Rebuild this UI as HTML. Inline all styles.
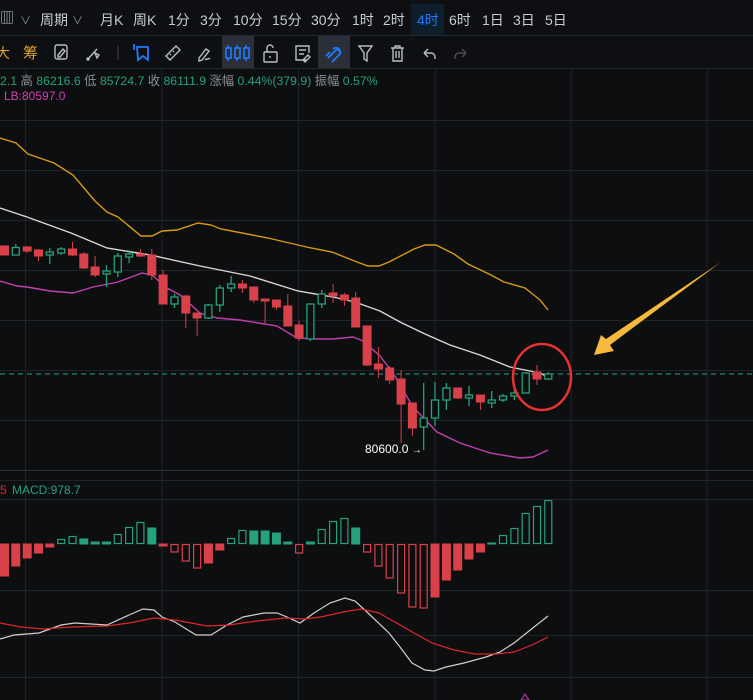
<!DOCTYPE html>
<html><head><meta charset="utf-8"><style>
html,body{margin:0;padding:0;background:#0d0e10;width:753px;height:700px;overflow:hidden;font-family:"Liberation Sans","Noto Sans CJK SC",sans-serif}
.r1{position:absolute;left:0;top:0;width:753px;height:35px;border-bottom:1px solid #24272c;background:#0e0f12}
.r1 span{position:absolute;top:10px;font-size:14px;color:#c8ccd2}
.r2{position:absolute;left:0;top:36px;width:753px;height:32px;border-bottom:1px solid #24272c;background:#0e0f12}
.info{position:absolute;top:71px;left:0;font-size:12.3px;color:#8a8f98;white-space:pre}
.info b{font-weight:normal;color:#26a17b}
</style></head><body>
<svg width="753" height="700" style="position:absolute;left:0;top:0">
<g stroke="#1f2226" stroke-width="1">
<line x1="25.5" y1="68" x2="25.5" y2="700"/><line x1="162" y1="68" x2="162" y2="700"/><line x1="298.5" y1="68" x2="298.5" y2="700"/><line x1="435" y1="68" x2="435" y2="700"/><line x1="571" y1="68" x2="571" y2="700"/><line x1="707" y1="68" x2="707" y2="700"/>
<line x1="0" y1="120.5" x2="753" y2="120.5"/><line x1="0" y1="170.5" x2="753" y2="170.5"/><line x1="0" y1="220.5" x2="753" y2="220.5"/><line x1="0" y1="270.5" x2="753" y2="270.5"/><line x1="0" y1="320.5" x2="753" y2="320.5"/><line x1="0" y1="370.5" x2="753" y2="370.5"/><line x1="0" y1="420.5" x2="753" y2="420.5"/>
<line x1="0" y1="470.5" x2="753" y2="470.5" stroke="#2a2d32"/>
<line x1="0" y1="480.5" x2="753" y2="480.5"/><line x1="0" y1="499.5" x2="753" y2="499.5"/><line x1="0" y1="590.5" x2="753" y2="590.5"/><line x1="0" y1="635.5" x2="753" y2="635.5"/><line x1="0" y1="677.5" x2="753" y2="677.5"/>
</g>
<line x1="0" y1="374" x2="753" y2="374" stroke="#1fa67a" stroke-dasharray="5,4" stroke-width="1"/>
<g fill="none" stroke-width="1.4">
<polyline stroke="#d99a0f" points="0,138 16,143 28,154 54,163 73,175 95,201 107,212 118,217 141,236 152,236 162,231 177,230 198,223 211,225 221,229 268,238 298,245 311,248 332,252 357,262 368,266 379,266 389,262 414,249 425,245 436,245 454,254 468,264 489,274 504,282 525,288 540,300 548,310"/>
<polyline stroke="#d8d8d8" points="0,208 27,217 71,233 95,243 107,248 150,255 200,266 250,276 298,291 333,297 355,302 380,311 400,322 425,334 450,345 480,355 510,367 540,373 548,377"/>
<polyline stroke="#c23fae" points="0,281 17,286 27,287 50,291 73,293 93,287 118,282 142,273 152,275 167,288 180,295 200,313 217,318 240,320 277,326 297,338 320,339 333,339 353,337 363,341 380,356 393,373 413,407 437,432 460,443 490,453 520,458 533,457 548,450"/>
</g>
<g stroke="#d9414a" stroke-width="1" fill="#d9414a">
<line x1="4.5" y1="246" x2="4.5" y2="255"/><rect x="0.5" y="246" width="8" height="9"/>
<line x1="27.2" y1="246" x2="27.2" y2="253"/><rect x="23.2" y="247" width="8" height="4"/>
<line x1="38.5" y1="249" x2="38.5" y2="261"/><rect x="34.5" y="250" width="8" height="6"/>
<line x1="72.5" y1="242" x2="72.5" y2="256"/><rect x="68.5" y="249" width="8" height="6"/>
<line x1="83.8" y1="252" x2="83.8" y2="269"/><rect x="79.8" y="254" width="8" height="14"/>
<line x1="95.1" y1="256" x2="95.1" y2="277"/><rect x="91.1" y="267" width="8" height="8"/>
<line x1="140.5" y1="249" x2="140.5" y2="257"/><rect x="136.5" y="254" width="8" height="2"/>
<line x1="151.8" y1="249" x2="151.8" y2="280"/><rect x="147.8" y="255" width="8" height="20"/>
<line x1="163.1" y1="270" x2="163.1" y2="304"/><rect x="159.1" y="275" width="8" height="29"/>
<line x1="185.8" y1="295" x2="185.8" y2="328"/><rect x="181.8" y="296" width="8" height="17"/>
<line x1="197.1" y1="313" x2="197.1" y2="336"/><rect x="193.1" y="313" width="8" height="5"/>
<line x1="242.4" y1="280" x2="242.4" y2="293"/><rect x="238.4" y="284" width="8" height="4"/>
<line x1="253.8" y1="287" x2="253.8" y2="303"/><rect x="249.8" y="287" width="8" height="13"/>
<line x1="265.1" y1="299" x2="265.1" y2="323"/><rect x="261.1" y="299" width="8" height="2"/>
<line x1="276.4" y1="300" x2="276.4" y2="310"/><rect x="272.4" y="300" width="8" height="7"/>
<line x1="287.8" y1="294" x2="287.8" y2="326"/><rect x="283.8" y="306" width="8" height="20"/>
<line x1="299.1" y1="321" x2="299.1" y2="341"/><rect x="295.1" y="325" width="8" height="13"/>
<line x1="333.1" y1="284" x2="333.1" y2="303"/><rect x="329.1" y="293" width="8" height="3"/>
<line x1="344.4" y1="293" x2="344.4" y2="306"/><rect x="340.4" y="295" width="8" height="5"/>
<line x1="355.7" y1="292" x2="355.7" y2="327"/><rect x="351.7" y="298" width="8" height="29"/>
<line x1="367.1" y1="326" x2="367.1" y2="366"/><rect x="363.1" y="326" width="8" height="39"/>
<line x1="378.4" y1="347" x2="378.4" y2="378"/><rect x="374.4" y="364" width="8" height="5"/>
<line x1="389.7" y1="366" x2="389.7" y2="384"/><rect x="385.7" y="368" width="8" height="12"/>
<line x1="401.1" y1="370" x2="401.1" y2="443"/><rect x="397.1" y="379" width="8" height="25"/>
<line x1="412.4" y1="403" x2="412.4" y2="436"/><rect x="408.4" y="403" width="8" height="25"/>
<line x1="457.7" y1="388" x2="457.7" y2="399"/><rect x="453.7" y="388" width="8" height="10"/>
<line x1="480.4" y1="395" x2="480.4" y2="410"/><rect x="476.4" y="395" width="8" height="7"/>
<line x1="537" y1="365" x2="537" y2="385"/><rect x="533" y="372" width="8" height="7"/>
</g>
<g stroke="#26a17b" stroke-width="1.3" fill="#0d0e10">
<line x1="15.8" y1="244" x2="15.8" y2="255"/><rect x="12.3" y="247.5" width="7" height="7.5"/>
<line x1="49.8" y1="248" x2="49.8" y2="264"/><rect x="46.3" y="252" width="7" height="3"/>
<line x1="61.2" y1="247" x2="61.2" y2="255"/><rect x="57.7" y="249" width="7" height="4"/>
<line x1="106.5" y1="265" x2="106.5" y2="287"/><rect x="103" y="271" width="7" height="3"/>
<line x1="117.8" y1="253" x2="117.8" y2="277"/><rect x="114.3" y="256" width="7" height="16"/>
<line x1="129.1" y1="250" x2="129.1" y2="263"/><rect x="125.6" y="254" width="7" height="3"/>
<line x1="174.5" y1="294" x2="174.5" y2="308"/><rect x="171" y="297" width="7" height="7"/>
<line x1="208.4" y1="304" x2="208.4" y2="319"/><rect x="204.9" y="305" width="7" height="13"/>
<line x1="219.8" y1="285" x2="219.8" y2="312"/><rect x="216.3" y="288" width="7" height="17"/>
<line x1="231.1" y1="276" x2="231.1" y2="292"/><rect x="227.6" y="284" width="7" height="4"/>
<line x1="310.4" y1="304" x2="310.4" y2="341"/><rect x="306.9" y="304" width="7" height="35"/>
<line x1="321.7" y1="290" x2="321.7" y2="308"/><rect x="318.2" y="294" width="7" height="10"/>
<line x1="423.7" y1="383" x2="423.7" y2="450"/><rect x="420.2" y="418" width="7" height="9"/>
<line x1="435" y1="382" x2="435" y2="426"/><rect x="431.5" y="400" width="7" height="18"/>
<line x1="446.4" y1="383" x2="446.4" y2="410"/><rect x="442.9" y="388" width="7" height="12"/>
<line x1="469" y1="386" x2="469" y2="406"/><rect x="465.5" y="395" width="7" height="3"/>
<line x1="491.7" y1="391" x2="491.7" y2="408"/><rect x="488.2" y="400" width="7" height="3"/>
<line x1="503" y1="394" x2="503" y2="402"/><rect x="499.5" y="396" width="7" height="4"/>
<line x1="514.4" y1="387" x2="514.4" y2="400"/><rect x="510.9" y="393" width="7" height="3"/>
<line x1="525.7" y1="372" x2="525.7" y2="393"/><rect x="522.2" y="373" width="7" height="20"/>
<line x1="548.3" y1="372" x2="548.3" y2="380"/><rect x="544.8" y="374" width="7" height="5"/>
</g>
<ellipse cx="542" cy="377" rx="29" ry="33" fill="none" stroke="#e53232" stroke-width="2.5"/>
<polygon points="721,262 606,339 601,335 594,355 614,351 610,345" fill="#f6b93b"/>
<text x="365" y="453" font-size="12" fill="#ffffff" font-family="Liberation Sans">80600.0 <tspan font-size="10">→</tspan></text>
<g fill="#d9414a" stroke="#d9414a" stroke-width="1">
<rect x="0.5" y="544" width="8" height="32"/><rect x="11.8" y="544" width="8" height="22"/><rect x="23.2" y="544" width="8" height="14"/><rect x="34.5" y="544" width="8" height="9"/><rect x="45.8" y="544" width="8" height="3"/>
<rect x="159.1" y="544" width="8" height="2"/>
<rect x="204.4" y="544" width="8" height="19"/><rect x="215.8" y="544" width="8" height="6"/>
<rect x="431" y="544" width="8" height="53"/><rect x="442.4" y="544" width="8" height="36"/><rect x="453.7" y="544" width="8" height="26"/><rect x="465" y="544" width="8" height="15"/><rect x="476.4" y="544" width="8" height="8"/>
</g>
<g fill="none" stroke="#d9414a" stroke-width="1.2">
<rect x="171" y="544.5" width="7" height="7.5"/><rect x="182.3" y="544.5" width="7" height="16.5"/><rect x="193.6" y="544.5" width="7" height="23.5"/>
<rect x="295.6" y="544.5" width="7" height="8.5"/>
<rect x="363.6" y="544.5" width="7" height="7.5"/><rect x="374.9" y="544.5" width="7" height="21.5"/><rect x="386.2" y="544.5" width="7" height="33.5"/><rect x="397.6" y="544.5" width="7" height="48.5"/><rect x="408.9" y="544.5" width="7" height="62.5"/><rect x="420.2" y="544.5" width="7" height="63.5"/>
</g>
<g fill="#26a17b" stroke="#26a17b" stroke-width="1">
<rect x="79.8" y="539" width="8" height="5"/><rect x="91.1" y="542" width="8" height="2"/><rect x="102.5" y="542" width="8" height="2"/>
<rect x="147.8" y="528" width="8" height="16"/>
<rect x="249.8" y="531" width="8" height="13"/><rect x="261.1" y="531" width="8" height="13"/><rect x="272.4" y="533" width="8" height="11"/><rect x="283.8" y="542" width="8" height="2"/>
<rect x="306.4" y="542" width="8" height="2"/>
<rect x="351.7" y="528" width="8" height="16"/>
<rect x="487.7" y="543" width="8" height="1"/>
</g>
<g fill="none" stroke="#26a17b" stroke-width="1.2">
<rect x="57.7" y="539.5" width="7" height="4"/><rect x="69" y="536.5" width="7" height="7"/>
<rect x="114.3" y="534.5" width="7" height="9"/><rect x="125.6" y="527.5" width="7" height="16"/><rect x="136.9" y="522.5" width="7" height="21"/>
<rect x="227.6" y="538.5" width="7" height="5"/><rect x="238.9" y="530.5" width="7" height="13"/>
<rect x="318.2" y="529.5" width="7" height="14"/><rect x="329.6" y="521.5" width="7" height="22"/><rect x="340.9" y="518.5" width="7" height="25"/>
<rect x="499.5" y="535.5" width="7" height="8"/><rect x="510.9" y="528.5" width="7" height="15"/><rect x="522.2" y="513.5" width="7" height="30"/><rect x="533.5" y="506.5" width="7" height="37"/><rect x="544.8" y="500.5" width="7" height="43"/>
</g>
<g fill="none" stroke-width="1.2">
<polyline stroke="#cfcfcf" points="0,639 14,635 39,633 61,625 75,623 107,625 129,615 143,609 154,610 162,617 175,622 196,635 211,635 227,625 243,617 264,613 277,613 287,617 300,623 314,613 330,603 345,598 355,601 368,613 389,633 400,647 412,663 425,670 434,671 446,667 464,663 486,657 500,652 514,643 529,631 548,616"/>
<polyline stroke="#e0262e" points="0,623 21,627 43,629 71,627 107,626 129,623 154,618 175,620 207,626 229,625 257,621 286,618 304,619 321,617 343,612 361,609 379,613 400,625 432,643 454,650 475,654 496,654 514,652 532,645 548,637"/>
</g>
<text x="0" y="494" font-size="12" fill="#e0262e" font-family="Liberation Sans">5</text>
<text x="12" y="494" font-size="12" fill="#26a17b" font-family="Liberation Sans">MACD:978.7</text>
<polygon points="525,694 521,700 529,700" fill="none" stroke="#c23fae" stroke-width="1"/>
</svg>
<div class="r1">
<span style="left:0;top:8px;color:#c8ccd2">▥</span><span style="left:20px;color:#8a8f98;font-size:11px;top:12px">∨</span>
<span style="left:40px">周期</span><span style="left:72px;color:#8a8f98;font-size:11px;top:12px">∨</span>
<span style="left:100px">月K</span><span style="left:133px">周K</span><span style="left:168px">1分</span><span style="left:200px">3分</span><span style="left:233px">10分</span><span style="left:272px">15分</span><span style="left:311px">30分</span><span style="left:352px">1时</span><span style="left:383px">2时</span>
<div style="position:absolute;left:411px;top:4px;width:33px;height:31px;background:#0f1e2c"></div>
<span style="left:417px;color:#1e7bff">4时</span><span style="left:449px">6时</span><span style="left:482px">1日</span><span style="left:513px">3日</span><span style="left:545px">5日</span>
</div>
<div class="r2">
<div style="position:absolute;left:222px;top:0;width:32px;height:32px;background:#2b2f37"></div>
<div style="position:absolute;left:318px;top:0;width:32px;height:32px;background:#2b2f37"></div>
<svg width="480" height="32" style="position:absolute;left:0;top:0" fill="none" stroke="#b9bdc4" stroke-width="1.4">
<text x="-4" y="22" font-size="14" fill="#d9a030" stroke="none" font-family="Noto Sans CJK SC">大</text>
<text x="23" y="22" font-size="15" fill="#e0a030" stroke="none" font-family="Noto Sans CJK SC">筹</text>
<rect x="55" y="9" width="12" height="14" rx="2"/><path d="M58 19l5-6 2 2-5 6h-2z"/>
<path d="M88 23l9-10M95 17l4 2-2 3z"/><circle cx="88" cy="23" r="1"/>
<line x1="118" y1="10" x2="118" y2="24" stroke="#33363b"/>
<path d="M135 9h-1v5M137 11h11v13l-5-4-5 4z" stroke="#1e7bff" stroke-width="1.8"/>
<path d="M166 20l10-10 4 4-10 10zM170 18l1 1M173 15l1 1"/>
<path d="M199 22l7-9 3 2-7 9-3 1zM205 24c2-2 3 0 5-2"/>
<g stroke="#1e7bff" stroke-width="1.6"><rect x="226" y="12" width="5" height="10"/><rect x="235" y="12" width="5" height="10"/><rect x="244" y="12" width="5" height="10"/><path d="M228 9v3M228 22v3M237 9v3M237 22v3M246 9v3M246 22v3"/></g>
<rect x="264" y="16" width="13" height="10" rx="1"/><path d="M267 16v-4a3 3 0 0 1 6 0"/><line x1="270" y1="20" x2="270" y2="22"/>
<path d="M307 24h-11v-14h13v7M299 14h7M299 18h5M303 24l5-5 2 2-5 5z"/>
<path d="M328 22l8-8a3 3 0 0 1 4 4l-8 8M326 20l4-4M332 26l4-4M333 13a4 4 0 0 1 6 6" stroke="#1e7bff" stroke-width="1.8"/>
<path d="M359 10h13l-5 7v8l-3-2v-6z"/>
<path d="M391 12h13M395 12v-2h5v2M393 12v13h9v-13M396 15v7M399 15v7"/>
<path d="M424 17h7a4 4 0 0 1 4 4v2M424 17l4-4M424 17l4 4"/>
<path d="M466 17h-7a4 4 0 0 0-4 4v2M466 17l-4-4M466 17l-4 4" stroke="#4a4d52"/>
</svg>
</div>
<div class="info"><b>2.1</b> 高 <b>86216.6</b> 低 <b>85724.7</b> 收 <b>86111.9</b> 涨幅 <b>0.44%(379.9)</b> 振幅 <b>0.57%</b></div>
<div style="position:absolute;left:4px;top:89px;font-size:12px;color:#d23fb4">LB:80597.0</div>
</body></html>
